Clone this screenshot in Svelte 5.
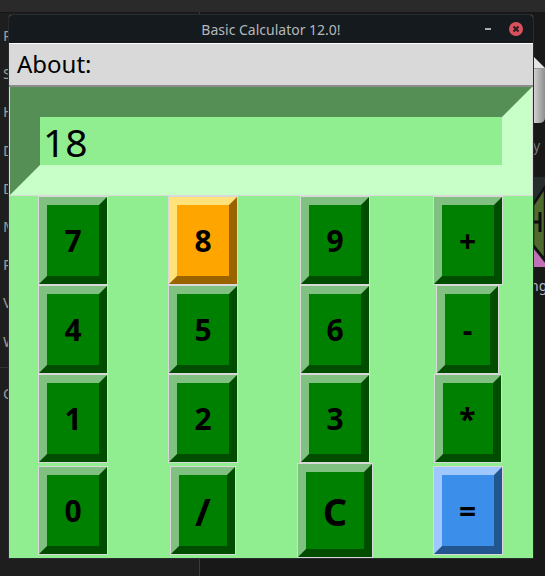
<script lang="ts">
	const rows = [
		[
			{ label: '7' },
			{ label: '8', cls: 'orange' },
			{ label: '9' },
			{ label: '+' }
		],
		[{ label: '4' }, { label: '5' }, { label: '6' }, { label: '-', cls: 'minus' }],
		[{ label: '1' }, { label: '2' }, { label: '3' }, { label: '*', cls: 'times' }],
		[
			{ label: '0' },
			{ label: '/', cls: 'slash' },
			{ label: 'C', cls: 'clear' },
			{ label: '=', cls: 'blue' }
		]
	];
	// only the first letters of the file manager sidebar stick out behind the window
	const places = ['R', 'S', 'H', 'D', 'D', 'M', 'P', 'V', 'W'];

	let display = $state('18');
</script>

<div class="desktop">
	<div class="topbar"></div>
	<aside class="sidebar">
		{#each places as place}
			<div class="place">{place}</div>
		{/each}
		<hr />
		<div class="place">O</div>
	</aside>

	<div class="peek">
		<div class="folder"></div>
		<span class="peek-label first">y</span>
		<svg class="tile" width="12" height="90" viewBox="0 0 12 90">
			<rect width="12" height="90" fill="#262d2d" />
			<polygon points="12,10 0,28 0,68 12,83" fill="#4f6a2c" stroke="#101010" stroke-width="2.5" />
			<path d="M0 45H8M7 35V55" stroke="#0c0c0c" stroke-width="3" fill="none" />
			<polygon points="0,71 12,86 12,90 0,90" fill="#c070b4" />
		</svg>
		<span class="peek-label second">ng</span>
	</div>

	<section class="window">
		<header class="titlebar">
			<span class="title">Basic Calculator 12.0!</span>
			<span class="minimize"></span>
			<span class="close">
				<svg width="14" height="14" viewBox="0 0 14 14">
					<circle cx="7" cy="7" r="7" fill="#d9515d" />
					<path d="M4.5 4.5L9.5 9.5M9.5 4.5L4.5 9.5" stroke="#2a1c20" stroke-width="2" />
				</svg>
			</span>
		</header>
		<div class="menu">About:</div>
		<div class="display-frame">
			<div class="display">{display}</div>
		</div>
		<div class="keys">
			{#each rows as row}
				{#each row as key}
					<button class="key {key.cls ?? ''}">{key.label}</button>
				{/each}
			{/each}
		</div>
	</section>
</div>

<style>
	:global(body) {
		margin: 0;
		background: #1b1b1b;
		font-family: 'Noto Sans', 'Open Sans', sans-serif;
	}

	.desktop {
		position: relative;
		width: 545px;
		height: 576px;
		overflow: hidden;
		background: linear-gradient(90deg, #1e1e1e 0 199px, #181818 199px);
	}

	.desktop::before {
		content: '';
		position: absolute;
		left: 199px;
		top: 12px;
		bottom: 0;
		width: 1px;
		background: #3a3a3a;
	}

	.topbar {
		height: 12px;
		background: #2a2a2a;
		border-bottom: 1px solid #161616;
	}

	.sidebar {
		position: absolute;
		left: 0;
		top: 16px;
		width: 9px;
		padding-left: 3px;
		color: #9b9b9b;
		font-size: 15px;
	}

	.place {
		height: 38.2px;
		line-height: 38.2px;
	}

	.sidebar hr {
		border: 0;
		border-top: 1px solid #333;
		margin: 7px 0 6px -3px;
		width: 12px;
	}

	.peek {
		position: absolute;
		left: 533px;
		top: 0;
		width: 12px;
		height: 576px;
		overflow: hidden;
	}

	.folder {
		position: absolute;
		top: 68px;
		width: 12px;
		height: 55px;
		box-sizing: border-box;
		border-top: 1px solid #9a9a9a;
		border-radius: 0 0 5px 0;
		background: linear-gradient(90deg, #d6d6d6, #8e8e8e);
	}

	.folder::before {
		content: '';
		position: absolute;
		top: -13px;
		left: 0;
		width: 12px;
		height: 12px;
		background: #e4e4e4;
		clip-path: polygon(0 0, 100% 100%, 0 100%);
	}

	.tile {
		position: absolute;
		top: 177px;
		left: 0;
	}

	.peek-label {
		position: absolute;
		color: #b9b9b9;
		font-size: 14px;
		white-space: nowrap;
	}

	.first {
		top: 136px;
		left: 0;
		color: #777;
	}

	.second {
		top: 276px;
		left: -3px;
	}

	.window {
		position: absolute;
		left: 9px;
		top: 15px;
		width: 524px;
		height: 543px;
		display: flex;
		flex-direction: column;
		background: #90ee90;
		box-shadow: 0 0 0 1px #262b2e;
		border-radius: 3px 3px 0 0;
	}

	.titlebar {
		position: relative;
		flex: none;
		height: 28px;
		display: flex;
		align-items: center;
		justify-content: center;
		background: #141a1e;
		border-radius: 3px 3px 0 0;
		color: #b4b8ba;
		font-size: 14px;
	}

	.minimize {
		position: absolute;
		left: 476px;
		top: 13px;
		width: 6px;
		height: 2px;
		background: #a8acae;
	}

	.close {
		position: absolute;
		left: 500px;
		top: 7px;
		width: 14px;
		height: 14px;
		line-height: 0;
	}

	.menu {
		flex: none;
		height: 44px;
		box-sizing: border-box;
		border-top: 1px solid #ffffff;
		border-bottom: 2px solid #8c8c8c;
		background: #d9d9d9;
		padding-left: 8px;
		color: #000;
		font-size: 24px;
		line-height: 40px;
	}

	.display-frame {
		flex: none;
		padding: 0 1px 1px;
		background: #d9d9d9;
	}

	.display {
		height: 48px;
		border-width: 30px;
		border-style: solid;
		border-color: #568f56 #c8ffc8 #c8ffc8 #568f56;
		background: #90ee90;
		padding-left: 3px;
		color: #000;
		font-size: 39px;
		line-height: 50px;
	}

	.keys {
		flex: 1;
		display: grid;
		grid-template-columns: 128px 132px 132px 133px;
		grid-template-rows: 89px 89px 89px 95px;
		justify-items: center;
		align-items: center;
	}

	.key {
		width: 68px;
		height: 87px;
		margin: 0;
		padding: 0;
		box-sizing: border-box;
		outline: 1px solid #d9d9d9;
		border-width: 8px;
		border-style: solid;
		border-color: #80c080 #004d00 #004d00 #80c080;
		background: #008000;
		color: #000;
		font-family: inherit;
		font-size: 30px;
		font-weight: 700;
	}

	.orange {
		border-color: #ffe27a #996300 #996300 #ffe27a;
		background: #ffa500;
	}

	.blue {
		border-color: #a0c8ff #23558f #23558f #a0c8ff;
		background: #3b8eea;
	}

	.minus {
		width: 61px;
	}

	.times {
		width: 66px;
	}

	.slash {
		width: 64px;
		font-size: 38px;
	}

	.clear {
		width: 74px;
		height: 93px;
		font-size: 38px;
	}
</style>
